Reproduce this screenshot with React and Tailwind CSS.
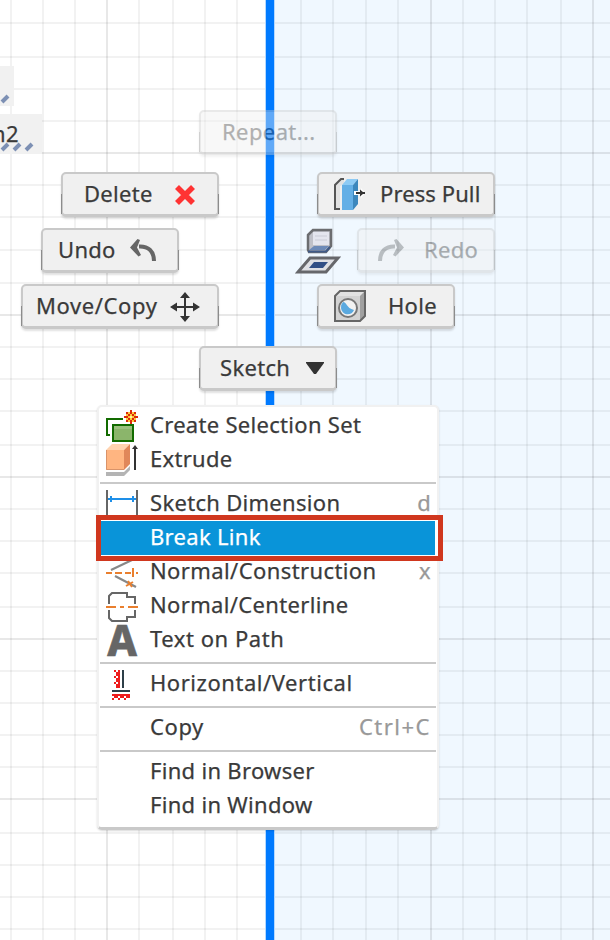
import React from "react";

const GRID_X = [11, 43, 75, 107, 139, 173, 205, 237, 269, 301, 333, 366, 398, 431, 463, 495, 527, 561, 593];
const GRID_Y = [23, 57, 89, 121, 153, 185, 217, 250, 283, 315, 347, 379, 411, 445, 477, 509, 541, 573, 607, 639, 671, 703, 735, 767, 799, 833, 865, 897, 929];

// Every fifth line is a major one
const isMajor = (index) => index % 5 === 3;
const isMajorRow = (index) => index % 5 === 4;

function SketchGrid() {
  return (
    <svg className="absolute inset-0" width="610" height="940" shapeRendering="crispEdges">
      <rect width="610" height="940" fill="#ffffff" />
      <rect x="274" width="336" height="940" fill="#f0f8ff" />
      {GRID_X.map((x, i) => (
        <rect key={x} x={x - 1} width="2" height="940" fill="#000" opacity={isMajor(i) ? 0.09 : 0.05} />
      ))}
      {GRID_Y.map((y, i) => (
        <rect key={y} y={y - 1} width="610" height="2" fill="#000" opacity={isMajorRow(i) ? 0.09 : 0.05} />
      ))}
      <rect x="265" width="10" height="940" fill="#b5d9ff" />
      <rect x="266" width="8" height="940" fill="#007aff" />
    </svg>
  );
}

function DeleteIcon() {
  return (
    <svg width="32" height="32" viewBox="0 0 32 32" fill="none">
      <path d="M9 9 L25 25 M25 9 L9 25" stroke="#ff3333" strokeWidth="5.6" />
    </svg>
  );
}

function UndoIcon() {
  return (
    <svg width="32" height="32" viewBox="0 0 32 32" fill="none">
      <path d="M11 12.5 C20 12 26 17 26 27" stroke="#666" strokeWidth="4" />
      <path d="M2 13.5 L9.5 5 L12 6 L9 13.5 L13 21 L10.5 22.5 Z" fill="#666" />
    </svg>
  );
}

function RedoIcon() {
  return (
    <svg width="32" height="32" viewBox="0 0 32 32" fill="none">
      <path d="M21 12.5 C12 12 6 17 6 27" stroke="#666" strokeWidth="4" />
      <path d="M30 13.5 L22.5 5 L20 6 L23 13.5 L19 21 L21.5 22.5 Z" fill="#666" />
    </svg>
  );
}

function MoveIcon() {
  return (
    <svg width="32" height="32" viewBox="0 0 32 32" fill="none">
      <path d="M17 5 V29 M5 17 H29" stroke="#333" strokeWidth="2" />
      <path d="M17 2 L22 8 H12 Z M17 32 L22 26 H12 Z M2 17 L9 12.5 V21.5 Z M32 17 L25 12.5 V21.5 Z" fill="#333" />
    </svg>
  );
}

function PressPullIcon() {
  return (
    <svg width="32" height="32" viewBox="0 0 32 32" fill="none">
      <path d="M1 31 V7 L7 1 H10 V6 L6 8 V31 Z" fill="#e2e2e2" />
      <path d="M6 31 H1 V7 L7 1 H10" stroke="#555" strokeWidth="2" />
      <path d="M8 7 L13 1 H24 L19 7 Z" fill="#8ecbf5" />
      <path d="M8 7 H19 V32 H8 Z" fill="#64afe6" />
      <path d="M19 7 L24 1 V26 L19 32 Z" fill="#3c87bd" />
      <path d="M20 13 H27 V10 L31 15 L27 20 V17 H20 Z" fill="#fff" />
      <path d="M22 15 H31" stroke="#333" strokeWidth="2" />
      <path d="M26 11.5 L30 15 L26 18.5 Z" fill="#333" />
    </svg>
  );
}

function HoleIcon() {
  return (
    <svg width="32" height="32" viewBox="0 0 32 32" fill="none">
      <path d="M1 6 L6 1 H31 V26 L26 31 H1 Z" fill="#e2e2e2" />
      <path d="M1 6 H26 V31 H1 Z" fill="#d3d3d3" />
      <path d="M26 6 L31 1 V26 L26 31 Z" fill="#a0a0a0" />
      <path d="M1 6 L6 1 H31 V26 L26 31 H1 Z" stroke="#666" strokeWidth="2" />
      <circle cx="14" cy="18" r="9" fill="#f2f2f2" stroke="#777" strokeWidth="2" />
      <path d="M9 12 C13 12 12 18 20 20 C18 26 8 26 7 18 Q7 14 9 12 Z" fill="#5ba9df" />
    </svg>
  );
}

function ArrowDownIcon() {
  return (
    <svg width="18" height="12" viewBox="0 0 18 12">
      <path d="M0 0 H18 V1 L10 12 H8 L0 1 Z" fill="#333" />
    </svg>
  );
}

// Extruded box hovering over its sketch profile
function ProfileIcon() {
  return (
    <svg width="46" height="46" viewBox="0 0 46 46" fill="none">
      <path d="M13 7 L18 2 H36 V18 L31 24 H14 L13 22 Z" fill="#bfc0c8" stroke="#6c6d70" strokeWidth="2.5" />
      <path d="M18 4 H34 V17 H18 Z" fill="#e4e5ee" />
      <path d="M20 8 H32 M20 12 H32" stroke="#d2d3de" strokeWidth="1.5" />
      <path d="M14 22 L19 18 H34 L30 22 Z" fill="#6d8ab8" />
      <path d="M13 23.5 H31 L35 19" stroke="#3f5a88" strokeWidth="2" />
      <path d="M3 44 L15 30 H43 L31 44 Z" fill="#dfe0e5" stroke="#66676b" strokeWidth="3" />
      <path d="M14 40 L19 34 H33 L28 40 Z" fill="#314f86" />
    </svg>
  );
}

const SPARK = ["...R...", ".RYRYR.", ".YRYRY.", "RRYWYRR", ".YRYRY.", ".RYRYR.", "...R..."];
const SPARK_COLORS = { R: "#dc2a0c", Y: "#ffc93a", W: "#fff7a0" };

function SelectionSetIcon() {
  return (
    <svg width="32" height="32" viewBox="0 0 32 32" fill="none" shapeRendering="crispEdges">
      <path d="M17 9 H1 V25 H4" stroke="#126b00" strokeWidth="2" />
      <rect x="7" y="15" width="20" height="16" fill="#8bb56b" stroke="#126b00" strokeWidth="2" />
      <path d="M8 16 H26 V19 H8 Z" fill="#9cc17f" />
      {SPARK.map((row, y) =>
        row.split("").map((cell, x) =>
          cell === "." ? null : (
            <rect key={`${x}-${y}`} x={18 + x * 2} y={y * 2} width="2" height="2" fill={SPARK_COLORS[cell]} />
          )
        )
      )}
    </svg>
  );
}

function ExtrudeIcon() {
  return (
    <svg width="32" height="32" viewBox="0 0 32 32" fill="none">
      <path d="M0 28 H18 L24 22 V26 L18 32 H0 Z" fill="#b4b4b4" />
      <path d="M0 6 L6 0 H24 L18 6 Z" fill="#ffd3b0" />
      <path d="M0 6 H18 V26 H0 Z" fill="#ffb581" />
      <path d="M18 6 L24 0 V20 L18 26 Z" fill="#e0875a" />
      <path d="M0.5 6 V25.5 H18" stroke="#d99369" />
      <path d="M29 3 V26" stroke="#333" strokeWidth="2" />
      <path d="M29 1 L32 5 H26 Z" fill="#333" />
    </svg>
  );
}

function DimensionIcon() {
  return (
    <svg width="32" height="32" viewBox="0 0 32 32" fill="none" shapeRendering="crispEdges">
      <path d="M1 2 V32 M31 2 V32" stroke="#666" strokeWidth="2" />
      <path d="M2 11 H30 M5 8 V14 M27 8 V14" stroke="#1e8fe8" strokeWidth="2" />
    </svg>
  );
}

function ConstructionIcon() {
  return (
    <svg width="32" height="32" viewBox="0 0 32 32" fill="none">
      <path d="M5 14 L26 4 M9 20 L30 31" stroke="#888" strokeWidth="2.2" />
      <path d="M0 17 H6 M9 17 H16 M19 17 H25 M30 17 H32 M27 12 V21" stroke="#e97f2e" strokeWidth="2" />
      <path d="M20 30 L27 26 M22 25 L26 31" stroke="#e97f2e" strokeWidth="2" />
    </svg>
  );
}

function CenterlineIcon() {
  return (
    <svg width="32" height="32" viewBox="0 0 32 32" fill="none">
      <path d="M3 14 V6 L6 3 H21 V7 H29 V14 M3 20 V28 L6 31 H21 V27 H29 V20" stroke="#666" strokeWidth="2" />
      <path d="M0 17 H10 M14 17 H18 M22 17 H32" stroke="#e97f2e" strokeWidth="2" />
    </svg>
  );
}

function TextPathIcon() {
  return (
    <span className="block w-8 text-center font-['Noto_Sans',sans-serif] text-[42px] leading-8 font-extrabold tracking-normal text-[#666] [-webkit-text-stroke:0.6px_#666]">
      A
    </span>
  );
}

function HorizontalVerticalIcon() {
  return (
    <svg width="32" height="32" viewBox="0 0 32 32" fill="none" shapeRendering="crispEdges">
      <path d="M13 2 V20 M6 27 H24" stroke="#ee1c1c" strokeWidth="2" />
      <path d="M11 4 V20 M8 29 H24" stroke="#ee1c1c" strokeWidth="2" strokeDasharray="4 2" />
      <path d="M9 2 V20 M6 31 H24" stroke="#ee1c1c" strokeWidth="2" strokeDasharray="2 4" />
      <path d="M17 2 V20 M6 23 H24" stroke="#2d3f48" strokeWidth="2" />
    </svg>
  );
}

function MarkingButton({ label, icon, iconFirst, disabled, className, labelClass }) {
  return (
    <button
      disabled={disabled}
      className={`relative flex h-[45px] shrink-0 items-center rounded-[5px] border-2 border-b-[3px] border-[#c9c9c9] bg-[#f0f0f0] pb-px shadow-[0_2px_2px_rgba(0,0,0,0.12)] disabled:opacity-40 ${className}`}
    >
      <span className="absolute top-1/2 bottom-0 -left-[2px] w-px bg-[#8c8c8c]" />
      <span className="absolute top-1/2 -right-[2px] bottom-0 w-px bg-[#8c8c8c]" />
      {iconFirst && icon}
      <span className={`-mt-0.5 whitespace-nowrap ${labelClass}`}>{label}</span>
      {!iconFirst && icon}
    </button>
  );
}

// Buttons sit left and right of the menu's centre line
function MarkingRow({ left, right, className }) {
  return (
    <div className="flex w-full">
      <div className={`flex w-1/2 justify-end ${className}`}>{left}</div>
      <div className="flex w-1/2">{right}</div>
    </div>
  );
}

function MarkingMenu() {
  return (
    <div className="flex flex-col items-center">
      <MarkingButton label="Repeat..." disabled className="w-[138px]" labelClass="pl-[21px] tracking-[0.4px]" />
      <div className="mt-[17px] mb-[17px] flex w-full flex-col gap-[11px]">
        <MarkingRow
          className="pr-[49px]"
          left={
            <MarkingButton label="Delete" icon={<DeleteIcon />} className="w-[158px] justify-between pr-[17px]" labelClass="pl-[21px]" />
          }
          right={
            <MarkingButton label="Press Pull" icon={<PressPullIcon />} iconFirst className="ml-[49px] w-[178px] pl-[15px]" labelClass="ml-[14px] tracking-[0.1px]" />
          }
        />
        <MarkingRow
          className="pr-[89px]"
          left={
            <MarkingButton label="Undo" icon={<UndoIcon />} className="w-[138px] justify-between pr-[17px]" labelClass="pl-[15px]" />
          }
          right={
            <div className="flex h-[45px] pl-[27px]">
              <ProfileIcon />
              <MarkingButton label="Redo" icon={<RedoIcon />} iconFirst disabled className="ml-4 w-[138px] pl-[15px]" labelClass="ml-[18px]" />
            </div>
          }
        />
        <MarkingRow
          className="pr-[49px]"
          left={
            <MarkingButton label="Move/Copy" icon={<MoveIcon />} className="w-[198px] justify-between pr-[17px]" labelClass="pl-[13px] tracking-[0.6px]" />
          }
          right={
            <MarkingButton label="Hole" icon={<HoleIcon />} iconFirst className="ml-[49px] w-[138px] pl-[15px]" labelClass="ml-[22px]" />
          }
        />
      </div>
      <MarkingButton label="Sketch" icon={<ArrowDownIcon />} className="w-[138px] justify-between pr-[11px]" labelClass="pl-[19px]" />
    </div>
  );
}

function MenuItem({ label, icon, shortcut, className = "" }) {
  return (
    <li className="flex h-[34px] items-center pr-1.5 pl-[7px]">
      <span className="mt-0.5 h-8 w-8 shrink-0">{icon}</span>
      <span className={`-mt-0.5 ml-3 flex-1 whitespace-nowrap ${className}`}>{label}</span>
      {shortcut && <span className={`-mt-0.5 text-[#999] ${shortcut.length > 1 ? "tracking-[1.5px]" : ""}`}>{shortcut}</span>}
    </li>
  );
}

// Hovered row with the callout frame around it
function HighlightedItem({ label }) {
  return (
    <li className="relative z-10 -mt-[5px] -mr-[6px] -mb-[7px] -ml-[3px] h-[46px] border-[5px] border-[#d0371e] bg-white pt-px pr-[3px] pb-px">
      <div className="flex h-full items-center bg-[#0994d9] pb-[5px] pl-[49px] text-white">{label}</div>
    </li>
  );
}

function Separator() {
  return <li className="mx-px mt-1.5 mb-0.5 h-0.5 bg-[#c9c9c9]" />;
}

function ContextMenu() {
  return (
    <ul className="h-[425px] w-[342px] rounded-[5px] border-2 border-b-[3px] border-[#f1f1f1] border-b-[#c9c9c9] bg-white pt-px shadow-[0_1px_2px_rgba(0,0,0,0.15)]">
      <MenuItem label="Create Selection Set" icon={<SelectionSetIcon />} />
      <MenuItem label="Extrude" icon={<ExtrudeIcon />} />
      <Separator />
      <MenuItem label="Sketch Dimension" icon={<DimensionIcon />} shortcut="d" />
      <HighlightedItem label="Break Link" />
      <MenuItem label="Normal/Construction" icon={<ConstructionIcon />} shortcut="x" className="tracking-[0.4px]" />
      <MenuItem label="Normal/Centerline" icon={<CenterlineIcon />} className="tracking-[0.35px]" />
      <MenuItem label="Text on Path" icon={<TextPathIcon />} className="tracking-[0.55px]" />
      <Separator />
      <MenuItem label="Horizontal/Vertical" icon={<HorizontalVerticalIcon />} className="tracking-[0.55px]" />
      <Separator />
      <MenuItem label="Copy" shortcut="Ctrl+C" className="tracking-[0.6px]" />
      <Separator />
      <MenuItem label="Find in Browser" />
      <MenuItem label="Find in Window" />
    </ul>
  );
}

// Plane labels cut off by the window edge
function PlaneLabels() {
  return (
    <div className="absolute top-[66px] left-0 flex flex-col items-start gap-2">
      <div className="h-10 w-3.5 bg-[#f1f1f1] pt-7">
        <svg className="block" width="14" height="12">
          <path d="M2 8 L8 2" stroke="#7d90b4" strokeWidth="4" />
        </svg>
      </div>
      <div className="h-10 w-[42px] bg-[#f1f1f1]">
        <span className="-ml-[8px] block h-7 pt-[3px]">n2</span>
        <svg className="block" width="42" height="12">
          <path d="M2 8 L8 2 M14 8 L20 2 M26 8 L32 2" stroke="#7d90b4" strokeWidth="4" />
        </svg>
      </div>
    </div>
  );
}

function App() {
  return (
    <div className="relative h-[940px] w-[610px] overflow-hidden font-['Noto_Sans',sans-serif] text-[22px] leading-8 tracking-[0.3px] text-[#3a3a3a] [-webkit-text-stroke:0.25px]">
      <SketchGrid />
      <PlaneLabels />
      <div className="relative flex w-[536px] flex-col items-center gap-[14px] pt-[110px]">
        <MarkingMenu />
        <ContextMenu />
      </div>
    </div>
  );
}

export default App;
